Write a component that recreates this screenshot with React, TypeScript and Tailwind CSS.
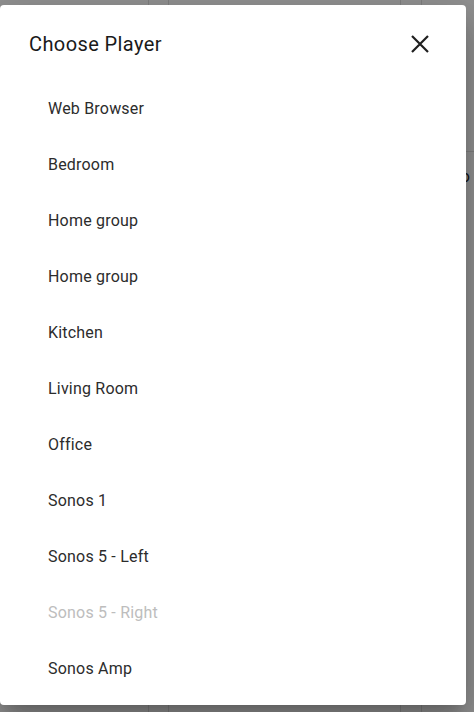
import React from "react";

type Player = { name: string; disabled?: boolean };

const players: Player[] = [
  { name: "Web Browser" },
  { name: "Bedroom" },
  { name: "Home group" },
  { name: "Home group" },
  { name: "Kitchen" },
  { name: "Living Room" },
  { name: "Office" },
  { name: "Sonos 1" },
  { name: "Sonos 5 - Left" },
  { name: "Sonos 5 - Right", disabled: true },
  { name: "Sonos Amp" },
];

function CloseIcon() {
  return (
    <svg width="28" height="28" viewBox="0 0 28 28" fill="none">
      <path d="M6 6L22 22M22 6L6 22" stroke="#1f1f1f" strokeWidth="2.2" strokeLinecap="butt" />
    </svg>
  );
}

export default function App() {
  return (
    <div
      className="relative h-[712px] w-[474px] overflow-hidden bg-[#f4f4f4]"
      style={{ fontFamily: "Roboto, 'Noto Sans', sans-serif" }}
    >
      {/* page underneath */}
      <div className="flex h-full w-full">
        <div className="w-[149px] shrink-0 border-r border-[#d6d6d6]" />
        <div className="w-[20px] shrink-0 border-r border-[#d6d6d6]" />
        <div className="w-[232px] shrink-0 border-r border-[#d6d6d6]" />
        <div className="w-[21px] shrink-0 border-r border-[#d6d6d6]" />
        <div className="flex min-w-0 flex-1 flex-col overflow-hidden">
          <div className="h-[152px] shrink-0 border-b border-[#d6d6d6]" />
          <div className="flex justify-end pr-[4px] pt-[13px] text-[16px] whitespace-nowrap text-[#222]">Radio</div>
        </div>
      </div>

      {/* scrim */}
      <div className="absolute inset-0 bg-[rgba(0,0,0,0.4)]" />

      {/* dialog */}
      <div className="absolute left-0 top-[5px] flex h-[700px] w-[466px] flex-col rounded-[4px] bg-white shadow-[0_11px_15px_-7px_rgba(0,0,0,0.2),0_24px_38px_3px_rgba(0,0,0,0.14),0_9px_46px_8px_rgba(0,0,0,0.12)]">
        <div className="flex h-[76px] items-start justify-between pl-[29px] pr-[32px] pt-[23px]">
          <h2 className="text-[20px] font-normal leading-8 tracking-[0.4px] text-[#1a1a1a]">Choose Player</h2>
          <button className="mt-[2px] flex h-[28px] w-[28px] items-center justify-center">
            <CloseIcon />
          </button>
        </div>
        <ul className="flex flex-col">
          {players.map((p, i) => (
            <li
              key={i}
              className={
                "flex h-[56px] items-center pl-[48px] text-[16px] tracking-[0.2px] " +
                (p.disabled ? "text-[#bdbdbd]" : "text-[#2c2c2c]")
              }
            >
              {p.name}
            </li>
          ))}
        </ul>
      </div>
    </div>
  );
}
